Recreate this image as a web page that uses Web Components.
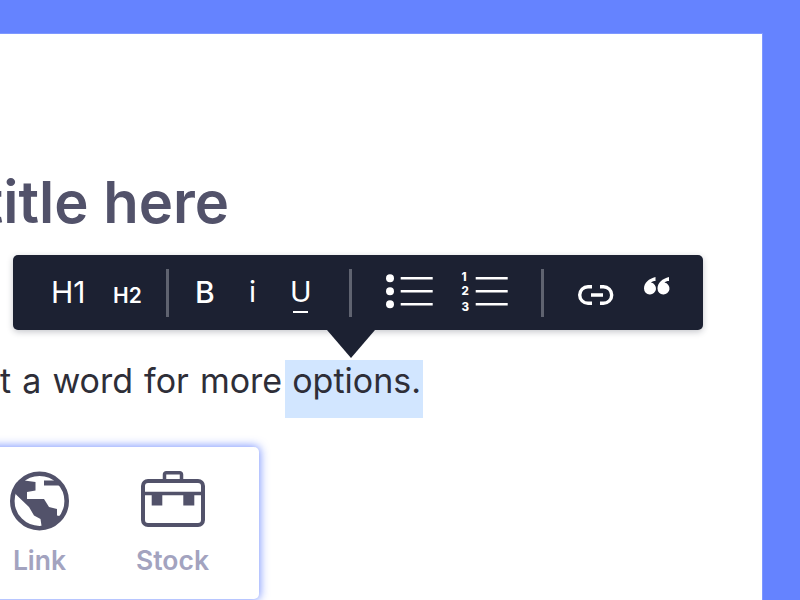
<!DOCTYPE html>
<html>
<head>
<meta charset="utf-8">
<title>Editor</title>
<style>
  html, body { margin: 0; height: 100%; overflow: hidden; }
  body { background: #6583ff; font-family: "Inter", "Liberation Sans", sans-serif; padding-top: 34px; box-sizing: border-box; }
</style>
</head>
<body>
<editor-sheet>
  <editor-title>Your title here</editor-title>
  <editor-text>Select a word for more <mark-word>options.</mark-word></editor-text>
  <format-toolbar></format-toolbar>
  <insert-card>
    <insert-item label="Link">
      <svg width="60" height="60" viewBox="0 0 60 60">
        <circle cx="29.500" cy="30" r="27.200" fill="none" stroke="#52526a" stroke-width="4.600"/>
        <path fill="#52526a" d="M6 12L10.500 9L25.500 11V19.500L17 21V28H34L39 36L47 38V44.500L54 46L44 55L32 58L30.500 48L24 44.500L19 36L7 24.500L3 20zM34 9.500H46L50 9V14.500H34z"/>
      </svg>
    </insert-item>
    <insert-item label="Stock">
      <svg width="64" height="56" viewBox="0 0 64 56">
        <path fill="none" stroke="#52526a" stroke-width="4" d="M7 10H57A5 5 0 0 1 62 15V49A5 5 0 0 1 57 54H7A5 5 0 0 1 2 49V15A5 5 0 0 1 7 10Z"/>
        <path fill="none" stroke="#52526a" stroke-width="3.500" d="M2 22.500H62M23.500 10V3.500A1.700 1.700 0 0 1 25.200 1.800H38.800A1.700 1.700 0 0 1 40.500 3.500V10"/>
        <path fill="#52526a" d="M10.700 22H21.300V34.500H10.700zM42.300 22H53.300V34.500H42.300z"/>
      </svg>
    </insert-item>
  </insert-card>
</editor-sheet>
<script>
class EditorSheet extends HTMLElement {
  connectedCallback() {
    this.attachShadow({ mode: 'open' });
    this.shadowRoot.innerHTML = `
      <style>
        :host {
          display: block;
          position: relative;
          width: 762px;
          height: 566px;
          background: #fff;
          box-shadow: 0 0 0 1px #7e98ff;
        }
        .clip { height: 100%; overflow: hidden; }
      </style>
      <div class="clip"><slot></slot></div>
    `;
  }
}
customElements.define('editor-sheet', EditorSheet);

class EditorTitle extends HTMLElement {
  connectedCallback() {
    this.attachShadow({ mode: 'open' });
    this.shadowRoot.innerHTML = `
      <style>
        :host {
          display: flex;
          justify-content: flex-end;
          width: 229px;
          padding-top: 134px;
          white-space: nowrap;
          font-size: 58px;
          line-height: 68px;
          font-weight: 600;
          color: #52526a;
        }
      </style>
      <span><slot></slot></span>
    `;
  }
}
customElements.define('editor-title', EditorTitle);

class EditorText extends HTMLElement {
  connectedCallback() {
    this.attachShadow({ mode: 'open' });
    this.shadowRoot.innerHTML = `
      <style>
        :host {
          display: flex;
          justify-content: flex-end;
          width: 423px;
          margin-top: 124px;
          white-space: nowrap;
          font-size: 34px;
          line-height: 42px;
          word-spacing: 1.5px;
          color: #2e2e38;
        }
      </style>
      <span><slot></slot></span>
    `;
  }
}
customElements.define('editor-text', EditorText);

class MarkWord extends HTMLElement {
  connectedCallback() {
    this.attachShadow({ mode: 'open' });
    this.shadowRoot.innerHTML = `
      <style>
        :host {
          display: inline-block;
          background: #d2e6ff;
          margin-left: -8px;
          padding: 0 2px 16px 7px;
        }
      </style>
      <slot></slot>
    `;
  }
}
customElements.define('mark-word', MarkWord);

class FormatToolbar extends HTMLElement {
  connectedCallback() {
    this.attachShadow({ mode: 'open' });
    this.shadowRoot.innerHTML = `
      <style>
        :host {
          position: absolute;
          left: 13px;
          top: 221px;
          width: 690px;
          height: 75px;
          background: #1c2132;
          border-radius: 5px;
          box-shadow: 0 2px 6px rgba(28, 33, 50, .25);
          color: #fff;
        }
        :host::after {
          content: "";
          position: absolute;
          left: 314px;
          top: 75px;
          border: solid transparent;
          border-width: 28px 24px 0;
          border-top-color: #1c2132;
        }
        .sep { position: absolute; top: 14px; width: 2.5px; height: 48px; background: #5f6370; }
        .t { position: absolute; line-height: 1; white-space: nowrap; }
        .ul { position: absolute; left: 280px; top: 56px; width: 15px; height: 2px; background: #fff; }
        svg { position: absolute; }
        text { font-family: "Inter", "Liberation Sans", sans-serif; font-weight: 800; font-size: 11.5px; }
      </style>
      <span class="t" style="left:38px;top:22px;font-size:30px">H1</span>
      <span class="t" style="left:100px;top:30px;font-size:21px;font-weight:600">H2</span>
      <span class="sep" style="left:153px"></span>
      <span class="t" style="left:182px;top:22px;font-size:30px;font-weight:500">B</span>
      <span class="t" style="left:236px;top:22px;font-size:29px">i</span>
      <span class="t" style="left:277px;top:22px;font-size:29px">U</span>
      <span class="ul"></span>
      <span class="sep" style="left:336px"></span>
      <svg style="left:372px;top:18px" width="48" height="36" viewBox="0 0 48 36" fill="#fff">
        <circle cx="5" cy="5.300" r="4"/><circle cx="5" cy="18.300" r="4"/><circle cx="5" cy="31.300" r="4"/>
        <path d="M15.700 4H47.700V6.600H15.700zM15.700 17H47.700V19.600H15.700zM15.700 30H47.700V32.600H15.700z"/>
      </svg>
      <svg style="left:447px;top:15px" width="48" height="44" viewBox="0 0 48 44" fill="#fff">
        <text x="1.500" y="11">1</text><text x="1.500" y="25">2</text><text x="1.500" y="41">3</text>
        <path d="M15.700 7H47.700V9.600H15.700zM15.700 20H47.700V22.600H15.700zM15.700 33H47.700V35.600H15.700z"/>
      </svg>
      <span class="sep" style="left:528px"></span>
      <svg style="left:564px;top:27px" width="38" height="26" viewBox="0 0 38 26" fill="none" stroke="#fff" stroke-width="3.400">
        <path d="M15 4.700H11a8.300 8.300 0 0 0 0 16.600h4M23 4.700h3.400a8.300 8.300 0 0 1 0 16.600H23M14 13h12"/>
      </svg>
      <svg style="left:630px;top:21px" width="28" height="22" viewBox="0 0 28 22" fill="#fff">
        <path d="M12.500 1C6 2.500 1 7 1 12.500a6 6 0 1 0 7-5.900C8.600 5.500 10.500 5 12.500 5zM26 1C19.500 2.500 14.500 7 14.500 12.500a6 6 0 1 0 7-5.900C22.100 5.500 24 5 26 5z"/>
      </svg>
    `;
  }
}
customElements.define('format-toolbar', FormatToolbar);

class InsertCard extends HTMLElement {
  connectedCallback() {
    this.attachShadow({ mode: 'open' });
    this.shadowRoot.innerHTML = `
      <style>
        :host {
          display: flex;
          width: 285.5px;
          height: 152px;
          margin-top: 29px;
          margin-left: -27px;
          background: #fff;
          border-radius: 5px;
          box-shadow: 0 0 10px 1px rgba(101, 131, 255, .85);
        }
      </style>
      <slot></slot>
    `;
  }
}
customElements.define('insert-card', InsertCard);

class InsertItem extends HTMLElement {
  connectedCallback() {
    this.attachShadow({ mode: 'open' });
    this.shadowRoot.innerHTML = `
      <style>
        :host {
          display: flex;
          flex-direction: column;
          align-items: center;
          width: 133px;
          padding-top: 24px;
          font-size: 26.5px;
          font-weight: 600;
          color: #a3a3bf;
        }
        .icon { height: 60px; }
        ::slotted(svg) { display: block; }
        .label { margin-top: 11px; line-height: 36px; }
      </style>
      <div class="icon"><slot></slot></div>
      <span class="label">${this.getAttribute('label')}</span>
    `;
  }
}
customElements.define('insert-item', InsertItem);
</script>
</body>
</html>
